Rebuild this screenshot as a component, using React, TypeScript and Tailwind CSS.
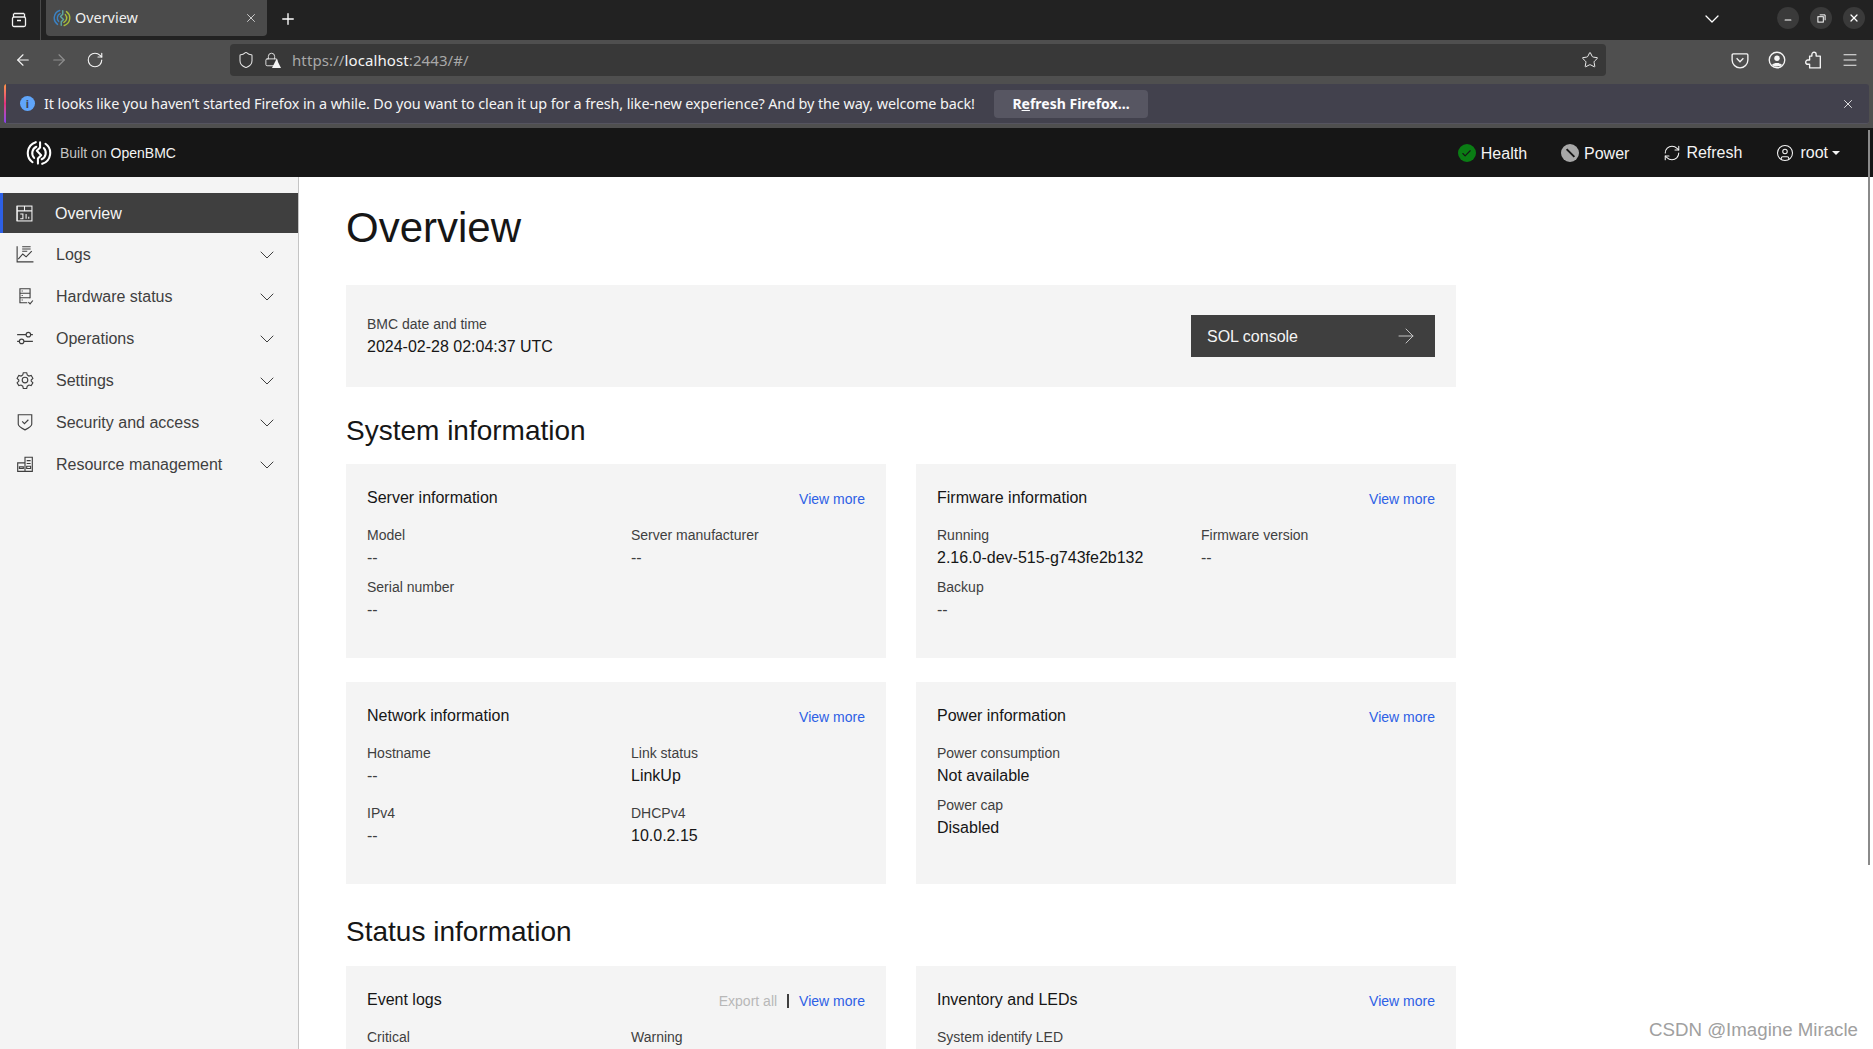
import React from "react";
import { ChevronDown, Check, RefreshCw, CircleUser, ArrowRight, X, Plus, ArrowLeft, RotateCw, Star, Menu, Shield, Lock, Minus } from "lucide-react";

const Logo = ({ className, mono }: { className?: string; mono?: boolean }) => {
  const a = mono ? "#ffffff" : "#3b82c4";
  const b = mono ? "#ffffff" : "#a8bf3a";
  return (
    <svg viewBox="0 0 24 24" className={className} fill="none" strokeWidth="1.9" strokeLinecap="round" strokeLinejoin="round">
      <path d="M9 2A10.5 10.5 0 0 0 6 20.5" stroke={a} />
      <path d="M9.5 6.2A6.5 6.5 0 0 0 7.5 16.5" stroke={a} />
      <path d="M15 22A10.5 10.5 0 0 0 18 3.5" stroke={b} />
      <path d="M14.5 17.8A6.5 6.5 0 0 0 16.5 7.5" stroke={b} />
      <path d="M13 2.2V7L10 10l4 4-3 3v4.8" stroke={mono ? "#ffffff" : "#5fa8a0"} />
    </svg>
  );
};

const S = (p: { children: React.ReactNode }) => (
  <svg viewBox="0 0 32 32" className="w-[18px] h-[18px] shrink-0" fill="none" stroke="#3f3f3f" strokeWidth="2">{p.children}</svg>
);

const navIcons: Record<string, React.ReactNode> = {
  Logs: <S><path d="M2 2v28h29" /><path d="M4 25l8-9 6 5 10-10" /><path d="M11 3h15M11 7h15M11 11h9" /></S>,
  "Hardware status": <S><path d="M25 20V3H7v25h13" /><path d="M7 11h18M7 19h18" /><path d="M10 7h2M10 15h2M10 23h2" /><path d="M22 27l3 3 5-6" /></S>,
  Operations: <S><path d="M2 10h16M26 10h4M2 22h4M14 22h16" /><circle cx="22" cy="10" r="4" /><circle cx="10" cy="22" r="4" /></S>,
  Settings: <S><path d="M13 3h6l1 4 3 2 4-1 3 5-3 3v2l3 3-3 5-4-1-3 2-1 4h-6l-1-4-3-2-4 1-3-5 3-3v-2l-3-3 3-5 4 1 3-2z" /><circle cx="16" cy="16" r="5" /></S>,
  "Security and access": <S><path d="M4 3h24v17c0 3-6 7-12 10C10 27 4 23 4 20z" /><path d="M11 15l4 4 7-7" /></S>,
  "Resource management": <S><path d="M3 14h13v15H3zM16 4h13v25H16z" /><path d="M6 21h7v3H6zM19 10h7M19 15h7M19 20h7v4h-7z" /></S>,
};

const NavItem = ({ label }: { label: string }) => (
  <div className="h-[42px] flex items-center pl-[16px] pr-[19px] text-[16px] text-[#3f3f3f]">
    {navIcons[label]}
    <span className="ml-[22px] pt-[1px] flex-1">{label}</span>
    <ChevronDown className="w-[24px] h-[24px] mt-[2px]" strokeWidth={1} />
  </div>
);

const Field = ({ label, value, dark }: { label: string; value: string; dark?: boolean }) => (
  <div>
    <div className="text-[14px] leading-[21px] text-[#3f3f3f]">{label}</div>
    <div className={`text-[16px] leading-[24px] ${dark ? "text-[#161616]" : "text-[#3f3f3f]"}`}>{value}</div>
  </div>
);

const Card = ({ title, height, extra, children }: { title: string; height: string; extra?: boolean; children: React.ReactNode }) => (
  <div className={`bg-[#f4f4f4] px-[21px] pt-[22px] ${height}`}>
    <div className="flex justify-between items-center h-[24px] mb-[15px]">
      <span className="text-[16px] text-[#161616]">{title}</span>
      <span className="text-[14px] flex items-center mt-[2px]">
        {extra && <span className="text-[#b8b8b8]">Export all</span>}
        {extra && <span className="w-[2px] h-[14px] bg-[#3f3f3f] mx-[10px]" />}
        <span className="text-[#2d60e5]">View more</span>
      </span>
    </div>
    {children}
  </div>
);

const Row = ({ children, gap = "gap-y-[7px]" }: { children: React.ReactNode; gap?: string }) => (
  <div className={`grid grid-cols-[264px_1fr] ${gap}`}>{children}</div>
);

export default function App() {
  return (
    <div className="relative w-[1873px] h-[1049px] overflow-hidden bg-white font-['Liberation_Sans',sans-serif]">
      {/* Browser tab strip */}
      <div className="h-[40px] bg-[#222222] flex items-center text-white font-['Noto_Sans',sans-serif]">
        <div className="w-[41px] h-full flex items-center justify-center border-r border-[#4a4a4a] shrink-0 pr-[3px]">
          <svg viewBox="0 0 16 16" className="w-[16px] h-[16px]" fill="none" stroke="#f4f4f4" strokeWidth="1.3"><rect x="1.5" y="5" width="13" height="9.5" rx="1.5" /><path d="M3 1.5h10M2.5 1.5v3.5M13.5 1.5v3.5M6 8.5h4" /></svg>
        </div>
        <div className="ml-[5px] w-[221px] h-[36px] -mt-[4px] bg-[#4b4b4b] rounded-b-[4px] flex items-center pl-[7px] pr-[9px]">
          <Logo className="w-[18px] h-[18px]" />
          <span className="ml-[4px] flex-1 text-[14.4px] text-[#f0f0f0]">Overview</span>
          <X className="w-[14px] h-[14px] text-[#ddd]" strokeWidth={1.5} />
        </div>
        <Plus className="ml-[12px] w-[18px] h-[18px] -mt-[2px]" strokeWidth={1.8} />
        <div className="flex-1" />
        <ChevronDown className="w-[24px] h-[24px] mr-[53px] -mt-[3px]" strokeWidth={1.3} />
        <div className="flex gap-[11px] mr-[8px] -mt-[4px]">
          <div className="w-[22px] h-[22px] rounded-full bg-[#3a3a3a] flex items-center justify-center"><Minus className="w-[10px] h-[10px] mt-[3px]" strokeWidth={2.5} /></div>
          <div className="w-[22px] h-[22px] rounded-full bg-[#3a3a3a] flex items-center justify-center"><svg viewBox="0 0 10 10" className="w-[9px] h-[9px]" fill="none" stroke="#fff" strokeWidth="1.1"><rect x="1" y="3" width="6" height="6" /><path d="M3 1h6v6" /></svg></div>
          <div className="w-[22px] h-[22px] rounded-full bg-[#3a3a3a] flex items-center justify-center"><X className="w-[12px] h-[12px]" strokeWidth={2.5} /></div>
        </div>
      </div>
      {/* Toolbar */}
      <div className="h-[44px] bg-[#4f4f4f] flex items-center font-['Noto_Sans',sans-serif] pb-[4px]">
        <ArrowLeft className="ml-[14px] w-[18px] h-[18px] text-[#f4f4f4]" strokeWidth={1.5} />
        <ArrowRight className="ml-[18px] w-[18px] h-[18px] text-[#8f8f8f]" strokeWidth={1.5} />
        <RotateCw className="ml-[18px] w-[18px] h-[18px] text-[#f4f4f4]" strokeWidth={1.5} />
        <div className="ml-[126px] w-[1376px] h-[32px] bg-[#383838] rounded-[4px] flex items-center pl-[7px] pr-[7px]">
          <Shield className="w-[18px] h-[18px] text-[#e5e5e5]" strokeWidth={1.4} />
          <span className="relative ml-[9px] w-[16px] h-[16px]">
            <Lock className="w-[15px] h-[15px] text-[#e5e5e5]" strokeWidth={1.5} />
            <svg viewBox="0 0 10 10" className="absolute -right-[1px] bottom-0 w-[9px] h-[9px]"><path d="M5 0l5 10H0z" fill="#f4f4f4" /></svg>
          </span>
          <span className="ml-[12px] flex-1 text-[15px] tracking-[0.1px] text-[#a8a8a8]">https://<span className="text-[#f4f4f4]">localhost</span>:2443/#/</span>
          <Star className="w-[18px] h-[18px] text-[#f0f0f0]" strokeWidth={1.3} />
        </div>
        <div className="ml-[125px] flex items-center gap-[18.5px] text-[#f4f4f4]">
          <svg viewBox="0 0 16 16" className="w-[18px] h-[18px]" fill="none" stroke="currentColor" strokeWidth="1.2"><path d="M2 2.5h12a1 1 0 0 1 1 1V8a7 7 0 0 1-14 0V3.5a1 1 0 0 1 1-1z" /><path d="M5 6.5L8 9.5 11 6.5" /></svg>
          <svg viewBox="0 0 16 16" className="w-[18px] h-[18px]" fill="none" stroke="currentColor" strokeWidth="1.2"><circle cx="8" cy="8" r="6.9" /><circle cx="8" cy="6.4" r="2.4" fill="currentColor" stroke="none" /><path d="M3.6 12.2C5 10.3 11 10.3 12.4 12.2 11 14.4 5 14.4 3.6 12.2z" fill="currentColor" stroke="none" /></svg>
          <svg viewBox="0 0 16 16" className="w-[18px] h-[18px]" fill="none" stroke="currentColor" strokeWidth="1.2" strokeLinejoin="round"><path d="M7 3a1.9 1.9 0 0 1 3.8 0v1.5h3.7v10.5H5v-3.2H3.4a1.9 1.9 0 0 1 0-3.8H5V4.5h2z" /></svg>
          <Menu className="w-[18px] h-[18px]" strokeWidth={1.3} />
        </div>
      </div>
      {/* Notification */}
      <div className="h-[44px] bg-[#4f4f4f] pb-[4px] px-[4px] font-['Noto_Sans',sans-serif]">
        <div className="h-full bg-[#42414d] rounded-[3px] border-b border-[#55545f] relative flex items-center overflow-hidden">
          <div className="absolute left-0 top-0 bottom-0 w-[2px] bg-gradient-to-b from-[#ff9640] via-[#e2307a] to-[#8a3ff0]" />
          <span className="ml-[16px] w-[15px] h-[15px] rounded-full bg-[#60a5fa] flex items-center justify-center text-[11px] font-bold leading-none text-[#42414d]">i</span>
          <span className="ml-[9px] text-[14.4px] tracking-[-0.1px] text-[#f4f4f4] whitespace-nowrap w-[931px]">It looks like you haven’t started Firefox in a while. Do you want to clean it up for a fresh, like-new experience? And by the way, welcome back!</span>
          <span className="ml-[19px] w-[154px] h-[28px] rounded-[4px] bg-[#575662] flex items-center justify-center text-[14px] font-bold text-[#fbfbfe] whitespace-nowrap">R<span className="underline">e</span>fresh Firefox…</span>
          <div className="flex-1" />
          <X className="w-[14px] h-[14px] text-[#f4f4f4] mr-[14px]" strokeWidth={1.5} />
        </div>
      </div>
      {/* App header */}
      <header className="h-[49px] bg-[#161616] flex items-center text-[#f4f4f4]">
        <Logo mono className="ml-[26px] w-[26px] h-[26px]" />
        <span className="ml-[8px] pt-[2px] text-[14px] text-[#c4c4c4]">Built on <span className="text-[#f4f4f4]">OpenBMC</span></span>
        <div className="flex-1" />
        <div className="flex items-center text-[16px] pt-[1px]">
          <span className="w-[18px] h-[18px] rounded-full bg-[#0a7d14] flex items-center justify-center"><Check className="w-[11px] h-[11px] text-[#161616]" strokeWidth={2.5} /></span>
          <span className="ml-[5px] mt-[1px]">Health</span>
          <span className="ml-[34px] w-[18px] h-[18px] rounded-full bg-[#a8a8a8] flex items-center justify-center overflow-hidden"><span className="w-[11px] h-[2px] bg-[#161616] rotate-45" /></span>
          <span className="ml-[5px] mt-[1px]">Power</span>
          <RefreshCw className="ml-[34px] w-[18px] h-[18px]" strokeWidth={1.4} />
          <span className="ml-[5px]">Refresh</span>
          <CircleUser className="ml-[34px] w-[18px] h-[18px]" strokeWidth={1.4} />
          <span className="ml-[6px]">root</span>
          <span className="ml-[4px] mr-[33px] w-0 h-0 border-x-[4px] border-x-transparent border-t-[4px] border-t-[#f4f4f4]" />
        </div>
      </header>
      <div className="flex h-[872px]">
        {/* Sidebar */}
        <aside className="w-[299px] h-full bg-[#f4f4f4] border-r border-[#c4c4c4] shrink-0 pt-[16px]">
          <div className="h-[40px] bg-[#3f3f3f] border-l-[3px] border-[#2d60e5] flex items-center pl-[13px] text-[16px] text-[#f4f4f4]">
            <svg viewBox="0 0 32 32" className="w-[17px] h-[17px] shrink-0" fill="none" stroke="#f4f4f4" strokeWidth="2"><rect x="2" y="2" width="28" height="28" /><path d="M2 11h28M16 2v9M2 2v28" /><path d="M8 17h5v9H8M19 17v9M24 22v4" /></svg>
            <span className="ml-[22px] pt-[1px]">Overview</span>
          </div>
          <div>
            {["Logs", "Hardware status", "Operations", "Settings", "Security and access", "Resource management"].map((l) => <NavItem key={l} label={l} />)}
          </div>
        </aside>
        {/* Main */}
        <main className="flex-1 pl-[47px]">
          <div className="w-[1110px]">
            <h1 className="text-[42px] leading-[48px] text-[#161616] font-light pt-[27px]">Overview</h1>
            <section className="mt-[33px] h-[102px] bg-[#f4f4f4] px-[21px] flex items-center justify-between">
              <div>
                <div className="text-[14px] leading-[21px] text-[#3f3f3f]">BMC date and time</div>
                <div className="text-[16px] leading-[24px] text-[#161616]">2024-02-28 02:04:37 UTC</div>
              </div>
              <div className="w-[244px] h-[42px] bg-[#3f3f3f] pl-[16px] pr-[17px] flex items-center justify-between text-[16px] text-[#f4f4f4]">
                <span className="pt-[1px]">SOL console</span>
                <ArrowRight className="w-[24px] h-[24px] text-[#c4c4c4]" strokeWidth={1} />
              </div>
            </section>
            <h2 className="mt-[27px] text-[28px] leading-[33px] text-[#161616]">System information</h2>
            <div className="mt-[17px] grid grid-cols-2 gap-x-[30px] gap-y-[24px]">
              <Card title="Server information" height="h-[194px]">
                <Row>
                  <Field label="Model" value="--" />
                  <Field label="Server manufacturer" value="--" />
                  <Field label="Serial number" value="--" />
                </Row>
              </Card>
              <Card title="Firmware information" height="h-[194px]">
                <Row>
                  <Field label="Running" value="2.16.0-dev-515-g743fe2b132" dark />
                  <Field label="Firmware version" value="--" />
                  <Field label="Backup" value="--" />
                </Row>
              </Card>
              <Card title="Network information" height="h-[202px]">
                <Row gap="gap-y-[15px]">
                  <Field label="Hostname" value="--" />
                  <Field label="Link status" value="LinkUp" dark />
                  <Field label="IPv4" value="--" />
                  <Field label="DHCPv4" value="10.0.2.15" dark />
                </Row>
              </Card>
              <Card title="Power information" height="h-[202px]">
                <Row>
                  <div className="col-span-2"><Field label="Power consumption" value="Not available" dark /></div>
                  <div className="col-span-2"><Field label="Power cap" value="Disabled" dark /></div>
                </Row>
              </Card>
            </div>
            <h2 className="mt-[31px] text-[28px] leading-[33px] text-[#161616]">Status information</h2>
            <div className="mt-[18px] grid grid-cols-2 gap-x-[30px]">
              <Card title="Event logs" height="h-[200px]" extra>
                <Row>
                  <Field label="Critical" value="" />
                  <Field label="Warning" value="" />
                </Row>
              </Card>
              <Card title="Inventory and LEDs" height="h-[200px]">
                <Field label="System identify LED" value="" />
              </Card>
            </div>
          </div>
        </main>
      </div>
      {/* Page scrollbar */}
      <div className="absolute right-[3px] top-[130px] w-[2px] h-[735px] bg-[#8a8a8a]" />
      {/* Watermark */}
      <div className="absolute right-[15px] bottom-[5px] text-[18.7px] text-[#a0a0a0]">CSDN @Imagine Miracle</div>
    </div>
  );
}
